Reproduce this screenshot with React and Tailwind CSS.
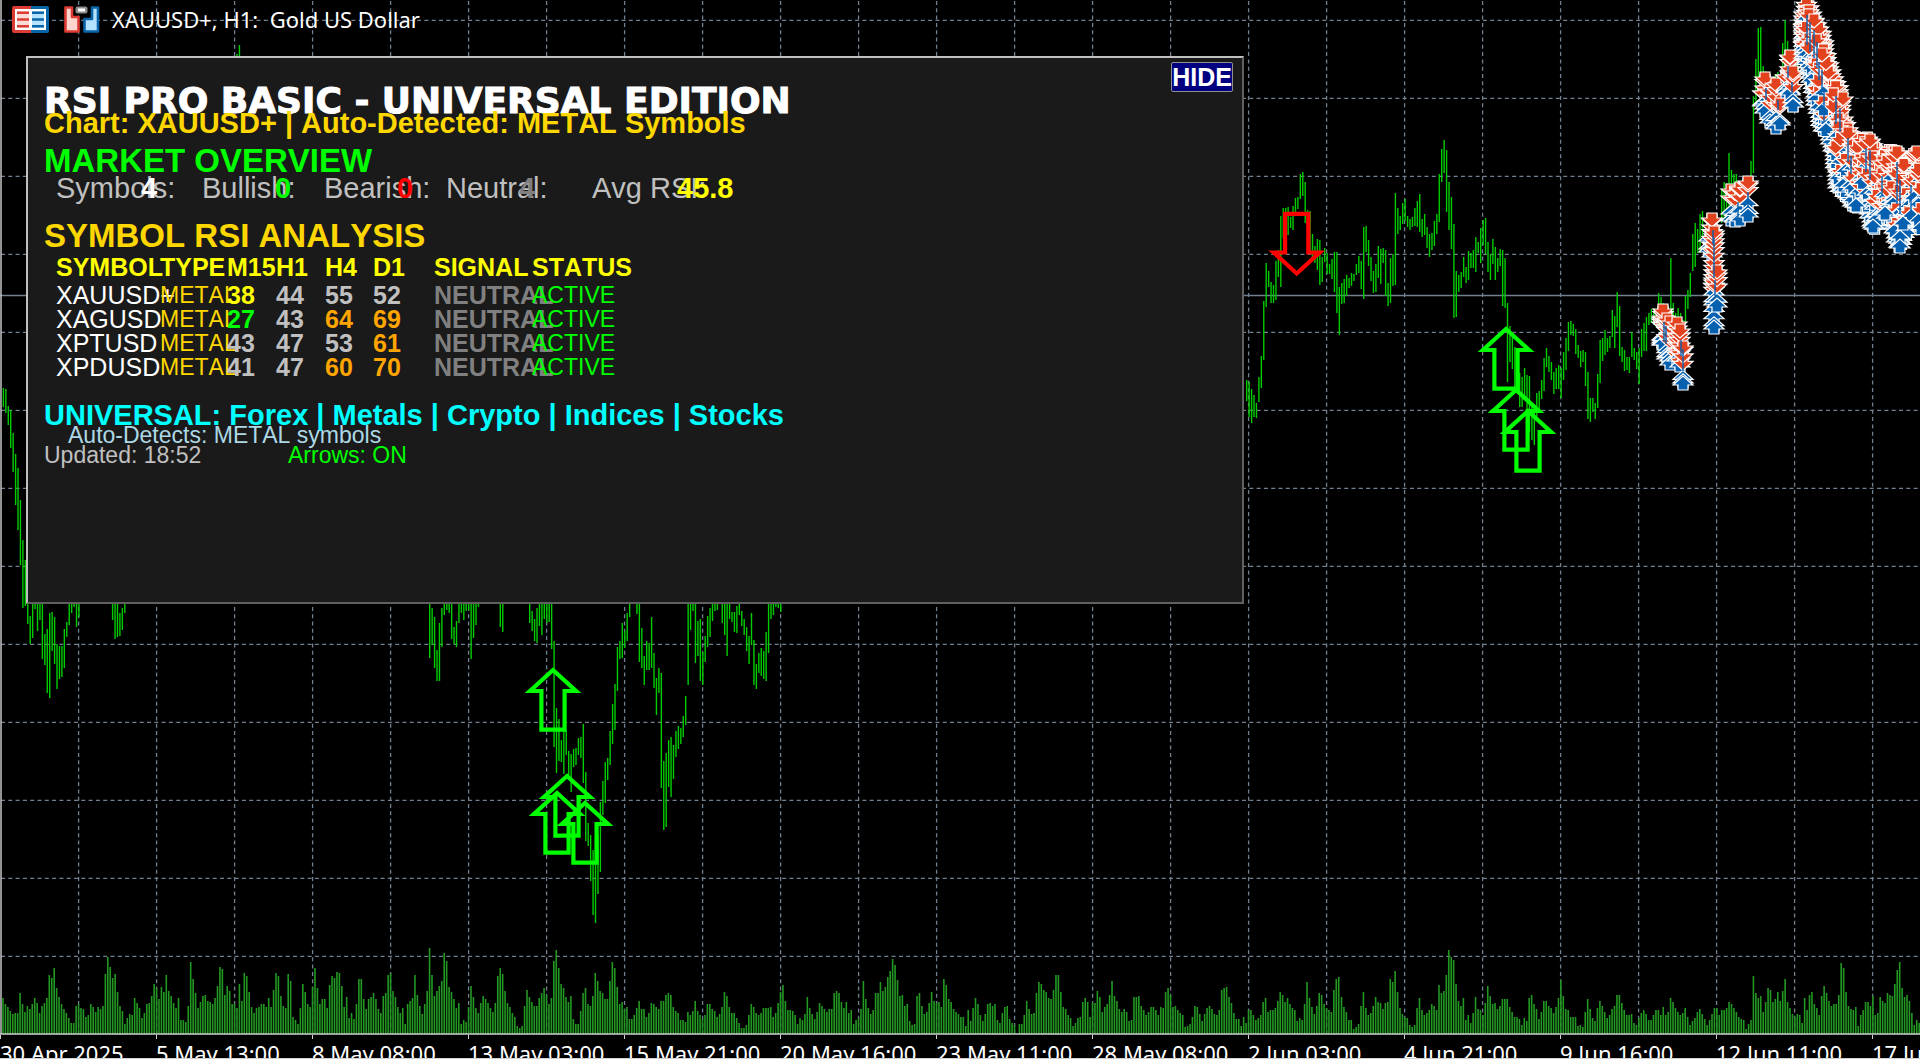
import React, { useState } from "react";

const STEP = 2.4375;

// volume heights, one number per bar
const volumes = [
  { x: 3, bars: [36,30,27,23,20,21,21,41,30,22,28,25,30,36,31,21,28,31,36,59,56,66,46,37,30,25,21,16,11,11,28,30,26,25,17,19,30,27,22,27,25,28,60,77,67,56,60,42,28,23,10,16,20,19,36,31,26,16,21,30,31,38,50,46,35,47,42,59,43,38,31,26,36,14,14,12,28,72,55,41,26,32,38,39,33,32,30,36,48,67,65,39,48,43,30,30,26,50,33,61,58,42,27,21,26,27,30,30,27,36,27,44,61,58,38,28,26,60,53,17,14,10,26,50,42,30,27,47,66,46,30,35,35,26,49,58,56,62,61,48,27,37,16,21,15,30,55,55,35,25,35,37,41,35,25,21,38,41,59,61,43,37,27,21,26,10,30,33,36,59,39,28,20,30,43,86,59,38,43,48,53,81,73,47,42,35,26,31,10,14,12,27,48,37,26,21] },
  { x: 480.7, bars: [31,38,35,31,26,22,31,58,66,60,43,31,27,21,17,8,6,8,28,44,37,32,28,28,36,41,46,39,30,36,73,84,66,50,46,37,32,38,15,10,10,23,41,46,30,28,38,61,53,43,41,35,35,53,72,66,47,30,32,25,27,15,15,19,26,33,25,25,17,21,31,30,27,25,33,33,39,41,39,27,23,21,14,14,12,22,19,23,33,23,19,15,19,30,30,25,23,17,20,27,42,38,27,21,21,16,11,6,6,9,19,30,27,21,19,21,26,26,26,27,17,21,31,42,49] },
  { x: 785.4, bars: [33,24,24,23,19,10,16,14,20,37,26,20,15,22,31,28,25,22,25,25,41,43,41,32,26,32,21,24,10,14,16,25,53,35,26,20,24,41,41,52,43,47,57,63,75,69,54,38,39,28,30,13,9,10,38,41,28,20,22,31,42,33,31,32,27,55,49,35,32,25,22,20,17,17,8,24,13,26,36,30,19,13,20,30,31,28,30,14,11,21,27,28,15,11,9,0,10,10,19,33,25,20,21,41,52,50,44,42,36,35,44,59,59,42,27,25,19,16,8,11,16,17,32,36,32,17,31,31,43,37,22,27,30,39,53,38,33,25,22,25,22,13,14,37,37,38,28,24,19,22,27,27,24,19,27,26,42,46,39,27,28,24,21,19,7,8,10,17,28,27,20,13,20,26,28,25,20,19,24,44,46,47,37,31,21,15,15,8,17,11,24,24,19,14,16,19,32,36,22,24,24,26,33,42,39,32,36,30,26,24,13,16,14,30,52,36,27,20,28,41,39,30,26,24,22,44,55,57] },
  { x: 1341.5, bars: [37,27,22,14,14,5,7,10,28,42,26,19,21,28,37,32,31,25,31,32,55,52,63,42,26,20,17,16,9,7,9,26,36,24,19,21,24,30,28,24,49,41,43,59,84,77,74,50,33,28,36,14,19,11,21,37,25,24,19,31,48,38,30,31,25,28,35,35,35,27,22,17,17,15,9,16,13,36,39,30,25,15,22,33,33,28,26,21,27,36,54,38,25,24,17,17,17,8,9,7,22,35,25,16,13,26,33,28,22,16,19,25,28,39,39,31,24,19,19,20,11,9,16,21,24,20,14,14,19,24,24,19,27,19,22,36,32,26,22,19,21,26,17,9,13,16,22,25,20,15,9,14,20,26,26,19,24,24,26,32,30,26,22,17,15,14,5,10,14,58,41,36,38,22,32,46,44,32,35,42,33,43,55,32,26,20,17,20,19,11,36,24,39,42,30,26,19,38,48,41,33,28,30,30,39,71,66,42,28,25,24,27,8,19,24,32,32,28,38,19,21,37,33,31,41,39,38,50,64,72,46,37,39,33,21,9,14,11] },
];

// price bars as high-low pairs (0 = no bar)
const prices = [
  { x: 3.4, bars: "388-407 389-413 406-425 410-448 433-472 454-505 468-530 500-565 540-608 560-606 570-624 616-644 604-638 590-609 590-631 590-620 590-659 634-665 629-693 613-698 612-651 617-664 644-689 646-679 646-677 629-668 622-637 590-625 590-613 590-607 590-627 590-617" },
  { x: 112.6, bars: "590-620 590-639 590-637 613-636 608-630 590-613" },
  { x: 237, bars: "54-60 45-60" },
  { x: 429.7, bars: "590-658 608-645 617-668 650-681 623-681 608-647 590-615 590-610 590-613 590-639 627-644 621-647 590-623 590-613 590-620 590-611 590-610 590-659 590-638 590-625 590-607" },
  { x: 500.3, bars: "590-627 590-632" },
  { x: 529.7, bars: "590-623 611-631 619-641 608-643 590-626 590-635 590-619 590-623 590-622 590-649 641-747 708-773 719-761 740-762 730-774 731-755 751-780 754-792 749-767 748-765 738-755 737-758 724-783 772-841 823-846 835-881 850-915 837-923 835-894 802-872 781-815 762-803 758-780 731-765 704-744 684-730 647-691 641-659 623-658 631-648 613-641 590-617 0 0 590-614 590-662 628-668 656-685 641-670 643-670 617-668 653-688 678-715 668-693 673-788 761-830 753-827 740-787 737-797 745-779 731-757 726-749 728-744 716-737 696-725 590-685 590-630 590-611 590-663 621-656 619-681 652-685 636-662 616-647 608-637 590-621 590-611 590-610 0 590-623 590-635 590-656 590-619 612-622 612-632 606-633 590-615 611-626 619-635 627-651 636-664 613-645 640-685 664-689 653-673 648-676 651-679 632-681 590-653 590-619 590-615 590-607 590-608 590-612" },
  { x: 1246.7, bars: "380-401 382-417 389-423 395-417 403-418 377-402 356-388 301-360 263-307 271-287 282-303 285-303 261-300 250-277 216-287 208-238 208-237 207-235 217-228 206-230 198-212 197-209 174-199 172-196 182-223 210-233 211-252 234-257 246-263 239-270 240-285 257-282 248-262 253-274 264-274 259-279 252-292 252-313 287-335 283-304 279-303 275-296 278-288 273-286 274-281 264-275 256-273 261-289 227-299 226-252 240-266 257-281 271-293 264-292 246-278 249-284 248-263 250-296 283-306 258-303 254-286 193-285 208-234 216-230 203-224 199-221 216-227 219-230 217-227 208-226 201-227 194-232 219-237 214-235 227-248 234-257 233-250 221-246 214-234 174-222 149-182 140-173 150-212 182-230 197-249 224-318 271-317 275-292 272-288 257-277 267-283 251-280 253-268 250-268 237-272 242-253 228-263 220-245 218-254 242-272 254-280 239-264 247-280 258-272 249-266 250-306 258-308 303-382 326-362 337-369 347-387 353-388 373-407 377-407 368-400 375-413 376-432 407-440 410-445 393-417 391-410 380-399 358-391 348-367 356-372 362-380 372-394 368-389 365-389 368-398 352-380 338-370 322-351 321-335 324-336 329-354 345-358 351-367 350-362 352-386 372-419 398-422 398-412 403-419 374-408 340-383 338-361 330-355 338-352 336-348 310-337 316-348 292-327 306-356 347-362 350-371 357-370 357-373 332-357 348-360 352-369 348-384 329-357 323-351 317-351 313-325 309-323 308-325 310-327 293-317 297-320 303-327 307-330 307-327 258-317 303-323 313-327 308-323 313-327 320-333 296-323 290-309 273-297 234-271 223-267 229-253 214-253 211-237" },
  { x: 1721.7, bars: "189-223 182-220 183-216 153-213 170-203 174-197 174-197" },
  { x: 1751, bars: "161-177 96-173 59-103 28-80 27-73 66-77 71-83" },
  { x: 1775.4, bars: "74-84 72-84" },
  { x: 1782.7, bars: "43-73 20-60 41-57 60-75 70-85" },
  { x: 1797.3, bars: "58-70" },
];

const ridge = [[1802,8],[1807,-4],[1814,14],[1822,28],[1827,54],[1834,74],[1838,80],[1843,112],[1851,130],[1860,134],[1868,132],[1873,140],[1882,152],[1890,144],[1899,148],[1907,165],[1914,148],[1924,146]];
const floor = [[1802,60],[1807,68],[1814,98],[1822,132],[1829,138],[1834,158],[1838,192],[1846,198],[1856,212],[1864,198],[1873,232],[1885,222],[1892,226],[1899,252],[1908,234],[1914,216],[1924,242]];

const lerp = (points, x) => {
  const i = Math.max(1, points.findIndex((p) => p[0] >= x));
  const [x0, y0] = points[i - 1];
  const [x1, y1] = points[i];
  return y0 + ((y1 - y0) * (x - x0)) / (x1 - x0);
};

// repeatable noise, 0..1
const noise = (n) => {
  const v = Math.sin(n * 12.9898) * 43758.5453;
  return v - Math.floor(v);
};

// columns of trade arrows: x, top of the first sell, bottom of the last buy, share of sells
const columns = [
  { x: 1662, top: 312, bottom: 350, sell: 0.5 },
  { x: 1663, top: 304, bottom: 350, sell: 0.6 },
  { x: 1667, top: 313, bottom: 364, sell: 0.6 },
  { x: 1670, top: 316, bottom: 370, sell: 0.6 },
  { x: 1677, top: 317, bottom: 366, sell: 0.9 },
  { x: 1680, top: 324, bottom: 372, sell: 0.9 },
  { x: 1683, top: 341, bottom: 390, sell: 0.6 },
  { x: 1709, top: 232, bottom: 257, sell: 0 },
  { x: 1712, top: 213, bottom: 262, sell: 0.9 },
  { x: 1714, top: 226, bottom: 300, sell: 0.95 },
  { x: 1714, top: 275, bottom: 334, sell: 0.3 },
  { x: 1717, top: 265, bottom: 312, sell: 0.6 },
  { x: 1731, top: 184, bottom: 226, sell: 0.5 },
  { x: 1735, top: 186, bottom: 227, sell: 0.5 },
  { x: 1740, top: 182, bottom: 226, sell: 0.5 },
  { x: 1748, top: 176, bottom: 222, sell: 0.45 },
  { x: 1763, top: 86, bottom: 111, sell: 0.4 },
  { x: 1765, top: 72, bottom: 118, sell: 0.5 },
  { x: 1770, top: 84, bottom: 128, sell: 0.6 },
  { x: 1776, top: 78, bottom: 134, sell: 0.6 },
  { x: 1780, top: 98, bottom: 130, sell: 0.5 },
  { x: 1786, top: 70, bottom: 98, sell: 0.4 },
  { x: 1790, top: 50, bottom: 100, sell: 0.6 },
  { x: 1793, top: 66, bottom: 112, sell: 0.6 },
];

const SELL = "h10v5h5l-10 9l-10-9h5z";
const BUY = "h10v-5h5l-10-9l-10 9h5z";
const sellArrow = (x, y, order) => ({ d: `M${x - 5} ${y}${SELL}`, fill: "#e2431e", order });
const buyArrow = (x, y, order) => ({ d: `M${x - 5} ${y}${BUY}`, fill: "#0660b0", order });

const trades = columns.flatMap(({ x, top, bottom, sell }, n) => {
  const out = [];
  const split = top + (bottom - top) * sell;
  for (let y = Math.max(top, split - 14), k = 0; sell > 0 && y >= top; y -= 3 + 5 * noise(n * 31 + k), k++) {
    out.push(sellArrow(x, y, n));
  }
  if (sell > 0) out.push(sellArrow(x, top, n));
  for (let y = split + 14, k = 0; y < bottom; y += 3 + 5 * noise(n * 17 + k), k++) {
    out.push(buyArrow(x, y, n));
  }
  out.push(buyArrow(x, bottom, n));
  return out;
});

// the dense run of trades at the right edge
for (let x = 1804, n = 0; x < 1923; x += STEP, n++) {
  const top = lerp(ridge, x);
  const height = lerp(floor, x) - top;
  for (let k = 0; k < height / 4; k++) {
    const r = noise(n * 97 + k * 7);
    const order = 100 + n * 0.4 + noise(n * 53 + k * 11) * 9;
    const at = k / (height / 4);
    if (at < 0.78 && r > at * 0.4) {
      trades.push(sellArrow(x, Math.min(top + k * 4, top + height - 26), order));
    }
    if (at > 0.22) {
      trades.push(buyArrow(x, Math.max(top + k * 4 + 4, top + 26), order - 3 + at * 4));
    }
  }
}
trades.sort((a, b) => a.order - b.order);

const bigUps = [[553, 667], [567, 773], [557, 790], [585, 800], [1506, 326], [1516, 387], [1528, 408]];

const dates = ["30 Apr 2025", "5 May 13:00", "8 May 08:00", "13 May 03:00", "15 May 21:00", "20 May 16:00", "23 May 11:00", "28 May 08:00", "2 Jun 03:00", "4 Jun 21:00", "9 Jun 16:00", "12 Jun 11:00", "17 Jun"];

const stats = [
  { label: "Symbols:", value: "4", cell: "w-[146px]", pad: "w-[85px]", color: "text-white" },
  { label: "Bullish:", value: "0", cell: "w-[122px]", pad: "w-[73px]", color: "text-[#00ff00]" },
  { label: "Bearish:", value: "0", cell: "w-[122px]", pad: "w-[73px]", color: "text-[#ff0000]" },
  { label: "Neutral:", value: "4", cell: "w-[146px]", pad: "w-[73px]", color: "text-[#808080]" },
  { label: "Avg RSI:", value: "45.8", cell: "w-[146px]", pad: "w-[85px]", color: "text-[#ffff00]" },
];

const symbols = [
  { name: "XAUUSD+", rsi: [38, 44, 55, 52] },
  { name: "XAGUSD", rsi: [27, 43, 64, 69] },
  { name: "XPTUSD", rsi: [43, 47, 53, 61] },
  { name: "XPDUSD", rsi: [41, 47, 60, 70] },
];

const rsiColor = (v) => {
  if (v < 30) return "text-[#00ff00]";
  if (v < 40) return "text-[#ffff00]";
  if (v >= 60) return "text-[#ffa500]";
  return "text-[#c0c0c0]";
};

const pricePath = prices
  .map(({ x, bars }) =>
    bars.split(" ").map((b, i) => {
      if (b === "0") return "";
      const [hi, lo] = b.split("-");
      return `M${(x + i * STEP).toFixed(2)} ${hi}V${lo}`;
    }).join("")
  )
  .join("");

const volumePath = volumes
  .map(({ x, bars }) => bars.map((h, i) => `M${(x + i * STEP).toFixed(2)} 1034v${-h}`).join(""))
  .join("");

const Chart = () => (
  <svg className="absolute inset-0 w-full h-full" viewBox="0 0 1920 1035" preserveAspectRatio="xMinYMin slice" aria-hidden="true">
    <g stroke="#708090" strokeWidth="1.3" strokeDasharray="4 3.3">
      {Array.from({ length: 24 }, (_, i) => (
        <path key={i} d={`M${78.6 + i * 78} 1V1034`} />
      ))}
      {Array.from({ length: 13 }, (_, i) => (
        <path key={i} d={`M1 ${20.4 + i * 78}H1920`} />
      ))}
    </g>
    <path d="M0 295.5H1920" stroke="#708090" strokeWidth="1.3" />
    <path d={volumePath} stroke="#229822" strokeWidth="1.6" />
    <path d={pricePath} stroke="#00cc00" strokeWidth="1.4" />
    <path d="M1 0V1034M0 1034H1920" stroke="#d0d0d0" strokeWidth="1.4" fill="none" />

    {/* signal arrows */}
    <g fill="none" stroke="#00ff00" strokeWidth="4.2">
      {bigUps.map(([x, y]) => (
        <path key={`${x}-${y}`} transform={`translate(${x} ${y})`} d="M0 3L23 24H11.6V62.7H-11.6V24H-23Z" />
      ))}
    </g>
    <path transform="translate(1296.7 276.5)" d="M0-3L23-24H11.6V-62.7H-11.6V-24H-23Z" fill="none" stroke="#ff0000" strokeWidth="4.2" />

    {/* executed trades */}
    <g stroke="#fff" strokeWidth="1.2">
      {trades.map((t, i) => (
        <path key={i} d={t.d} fill={t.fill} />
      ))}
      {[[1814, 14], [1822, 48], [1843, 92], [1848, 127], [1870, 134], [1897, 146], [1917, 146]].map(([x, y]) => (
        <path key={x} d={sellArrow(x, y).d} fill="#e2431e" />
      ))}
      {[[1856, 212], [1873, 233], [1900, 244], [1900, 253], [1903, 230], [1885, 220]].map(([x, y]) => (
        <path key={`${x}-${y}`} d={buyArrow(x, y).d} fill="#0660b0" />
      ))}
    </g>
    <path
      stroke="#0660b0"
      strokeWidth="1.4"
      d="M1664 322v20M1666 326v18M1681 340v16M1683 349v22M1713 230v14M1714 238v40M1715 280v16M1738 202v18M1748 192v16M1766 88v12M1778 100v10M1788 66v12M1792 82v12M1807 15v30M1810 22v30M1814 30v28M1817 42v26M1819 62v18M1822 70v22M1824 92v30M1836 96v28M1840 108v24M1848 138v24M1851 156v18M1866 148v24M1870 150v30M1882 176v20M1897 162v42M1900 180v34M1911 185v34"
    />
  </svg>
);

const Toolbar = () => (
  <header className="relative flex items-start h-14 pl-3 pt-1.5">
    <svg width="37" height="27" viewBox="0 0 37 27" aria-hidden="true">
      <path d="M2 0h17v27H2q-2 0-2-2V2q0-2 2-2z" fill="#dc3c34" />
      <path d="M19 0h16q2 0 2 2v23q0 2-2 2H19z" fill="#0a64a8" />
      <path d="M3 3h31v21H3z" fill="#fff" />
      <path d="M5 5h12v17H5z" fill="#ffdcd6" />
      <path d="M20 5h12v17H20z" fill="#b4e2ff" />
      <path d="M5 6.7h12M5 13.5h12M5 20.3h12" stroke="#dc3c34" strokeWidth="2.4" />
      <path d="M20 6.7h12M20 13.5h12M20 20.3h12" stroke="#0a64a8" strokeWidth="2.4" />
    </svg>
    <svg className="ml-3.5" width="38" height="27" viewBox="0 0 38 27" aria-hidden="true">
      <path d="M2.5 1.5h6.5v9.5h6.5v14.5h-13z" fill="#ffd6ce" stroke="#dc3c34" strokeWidth="2.6" strokeLinejoin="round" />
      <path d="M29 1.5h6v24H21.5V13H29z" fill="#b4e2ff" stroke="#0a64a8" strokeWidth="2.6" strokeLinejoin="round" />
      <rect x="12.5" y="0.5" width="12" height="7" rx="2" fill="#8c8c8c" />
      <rect x="15" y="2.5" width="7" height="3" fill="#fff" />
    </svg>
    <h1 className="ml-[11px] font-['Noto_Sans',sans-serif] text-[22px] leading-[26px] text-white whitespace-pre">XAUUSD+, H1:  Gold US Dollar</h1>
  </header>
);

const SymbolTable = () => (
  <table className="table-fixed w-[600px] mt-1 ml-3 text-[25px] leading-6 text-left whitespace-nowrap">
    <colgroup>
      <col className="w-[104px]" />
      <col className="w-[67px]" />
      <col className="w-[49px]" />
      <col className="w-[49px]" />
      <col className="w-[48px]" />
      <col className="w-[61px]" />
      <col className="w-[98px]" />
      <col />
    </colgroup>
    <thead>
      <tr className="h-7 text-[#ffff00]">
        {["SYMBOL", "TYPE", "M15", "H1", "H4", "D1", "SIGNAL", "STATUS"].map((h) => (
          <th key={h} scope="col" className="p-0 font-bold align-top">{h}</th>
        ))}
      </tr>
    </thead>
    <tbody>
      {symbols.map((s) => (
        <tr key={s.name} className="h-6">
          <td className="p-0 text-white">{s.name}</td>
          <td className="p-0 text-[23px] text-[#ffd700]">METAL</td>
          {s.rsi.map((v, i) => (
            <td key={i} className={`p-0 font-bold ${rsiColor(v)}`}>{v}</td>
          ))}
          <td className="p-0 font-bold text-[#808080]">NEUTRAL</td>
          <td className="p-0 text-[23px] text-[#00ff00]">ACTIVE</td>
        </tr>
      ))}
    </tbody>
  </table>
);

const Panel = () => {
  const [hidden, setHidden] = useState(false);

  return (
    <section className="relative ml-[26px] max-w-[1218px] min-h-[548px] pl-4 pt-[31px] bg-[#1a1a1a] border-2 border-t-[#c0c0c0] border-l-[#c0c0c0] border-r-[#606060] border-b-[#606060] whitespace-nowrap [font-kerning:none]">
      <button
        type="button"
        onClick={() => setHidden(!hidden)}
        className="absolute top-1 right-[9px] w-[62px] h-[30px] flex items-center justify-center rounded-xs border border-[#909090] bg-[#000080] text-white text-[25px] leading-6 font-bold"
      >
        {hidden ? "SHOW" : "HIDE"}
      </button>

      {!hidden && (
        <>
          <h2 className="font-['DejaVu_Sans',sans-serif] font-bold text-[36px] leading-6 text-white [-webkit-text-stroke:1px_white]">RSI PRO BASIC - UNIVERSAL EDITION</h2>
          <p className="relative text-[29px] leading-5 font-bold text-[#ffd700]">Chart: XAUUSD+ | Auto-Detected: METAL Symbols</p>

          <h3 className="mt-3.5 text-[33px] leading-7 font-bold text-[#00ff00]">MARKET OVERVIEW</h3>
          <dl className="flex ml-3 text-[29px] leading-[26px]">
            {stats.map((s) => (
              <div key={s.label} className={`flex shrink-0 ${s.cell}`}>
                <dt className={`shrink-0 text-[#c0c0c0] ${s.pad}`}>{s.label}</dt>
                <dd className={`font-bold ${s.color}`}>{s.value}</dd>
              </div>
            ))}
          </dl>

          <h3 className="mt-5 text-[33px] leading-[30px] font-bold text-[#ffd700]">SYMBOL RSI ANALYSIS</h3>
          <SymbolTable />

          <p className="mt-[26px] text-[29px] leading-5 font-bold text-[#00ffff]">UNIVERSAL: Forex | Metals | Crypto | Indices | Stocks</p>
          <p className="ml-6 text-[23px] leading-5 text-[#add8e6]">Auto-Detects: METAL symbols</p>
          <div className="flex text-[23px] leading-5">
            <p className="w-[244px] text-[#c0c0c0]">Updated: 18:52</p>
            <p className="text-[#00ff00]">Arrows: ON</p>
          </div>
        </>
      )}
    </section>
  );
};

const App = () => (
  <div className="flex flex-col min-h-screen overflow-hidden bg-black font-['Liberation_Sans',Arial,sans-serif]">
    <main className="relative flex-1">
      <Chart />
      <Toolbar />
      <Panel />
    </main>
    <footer className="h-6 overflow-hidden border-b border-[#d0d0d0]">
      <ol className="flex">
        {dates.map((d) => (
          <li key={d} className="w-[156px] shrink-0 font-['Noto_Sans',sans-serif] text-[22px] leading-7 text-white whitespace-nowrap">
            <span className="block w-px h-1 bg-[#d0d0d0]" />
            {d}
          </li>
        ))}
      </ol>
    </footer>
  </div>
);

export default App;
